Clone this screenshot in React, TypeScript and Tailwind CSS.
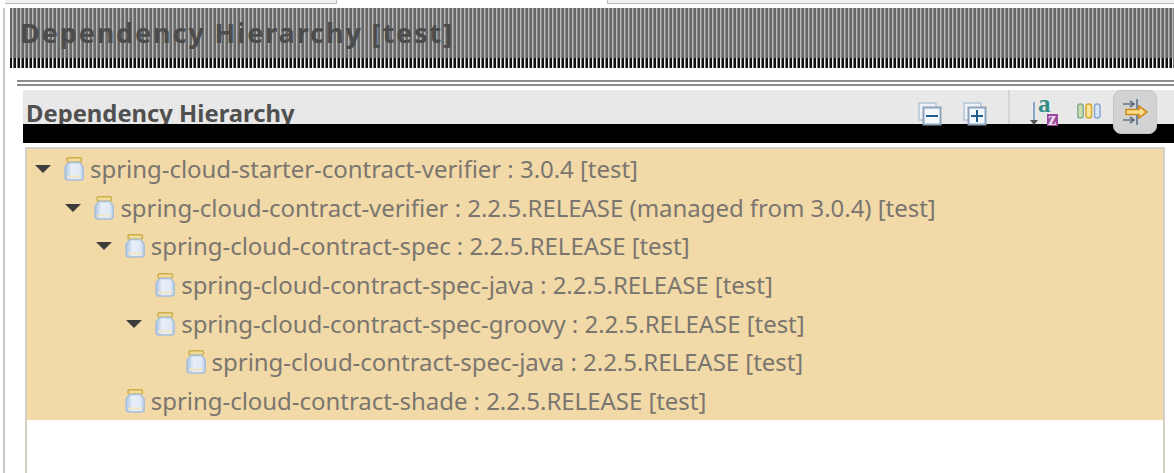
import React from "react";

const rows = [
  { depth: 0, open: true, text: "spring-cloud-starter-contract-verifier : 3.0.4 [test]" },
  { depth: 1, open: true, text: "spring-cloud-contract-verifier : 2.2.5.RELEASE (managed from 3.0.4) [test]" },
  { depth: 2, open: true, text: "spring-cloud-contract-spec : 2.2.5.RELEASE [test]" },
  { depth: 3, open: false, text: "spring-cloud-contract-spec-java : 2.2.5.RELEASE [test]" },
  { depth: 3, open: true, text: "spring-cloud-contract-spec-groovy : 2.2.5.RELEASE [test]" },
  { depth: 4, open: false, text: "spring-cloud-contract-spec-java : 2.2.5.RELEASE [test]" },
  { depth: 2, open: false, text: "spring-cloud-contract-shade : 2.2.5.RELEASE [test]" },
];

function Jar() {
  return (
    <svg width="20" height="24" viewBox="0 0 20 24" className="shrink-0">
      <defs>
        <linearGradient id="glass" x1="0" y1="0" x2="1" y2="0">
          <stop offset="0" stopColor="#a9c2e0" />
          <stop offset="0.35" stopColor="#e8eff9" />
          <stop offset="0.8" stopColor="#dfe8f5" />
          <stop offset="1" stopColor="#b0c6e2" />
        </linearGradient>
      </defs>
      <rect x="3" y="0.8" width="14.5" height="4.4" rx="1.6" fill="#f0dc9a" stroke="#cdae48" strokeWidth="1.5" />
      <path
        d="M5 5.5h10.5l3 3.5c.6.7.9 1.4.9 2.3V20a3 3 0 0 1-3 3H4a3 3 0 0 1-3-3v-8.7c0-.9.3-1.6.9-2.3z"
        fill="url(#glass)"
        stroke="#a9bfda"
        strokeWidth="1.4"
      />
      <path d="M3 19.5h14" stroke="#f1e6c4" strokeWidth="2" />
    </svg>
  );
}

function Row({ depth, open, text }: { depth: number; open: boolean; text: string }) {
  return (
    <div className="flex h-[38.72px] items-center pt-[1px]" style={{ paddingLeft: 9 + depth * 30.4 }}>
      <div className="-ml-[1px] flex w-[29px] shrink-0 items-center">
        {open && <div className="h-0 w-0 border-x-[8px] border-t-[8px] border-x-transparent border-t-[#3c3c3c]" />}
      </div>
      <Jar />
      <span className="ml-[6px] text-[24px] tracking-[-0.04px] whitespace-nowrap text-[#7a766f]">{text}</span>
    </div>
  );
}

function ToolbarIcons() {
  return (
    <div className="flex items-start">
      <svg width="24" height="24" viewBox="0 0 24 24" className="mt-[12px] mr-[21px]">
        <rect x="1" y="1" width="17" height="17" fill="#eef2f7" stroke="#b3c3d6" strokeWidth="1.5" />
        <rect x="5.5" y="5.5" width="17" height="17" fill="#f4f9fd" stroke="#8ea4bd" strokeWidth="2" />
        <path d="M8 14h12" stroke="#1f5b8c" strokeWidth="2" />
      </svg>
      <svg width="24" height="24" viewBox="0 0 24 24" className="mt-[12px] mr-[21px]">
        <rect x="1" y="1" width="17" height="17" fill="#eef2f7" stroke="#b3c3d6" strokeWidth="1.5" />
        <rect x="5.5" y="5.5" width="17" height="17" fill="#f4f9fd" stroke="#8ea4bd" strokeWidth="2" />
        <path d="M8 14h12M14 8v12" stroke="#1f5b8c" strokeWidth="2" />
      </svg>
      <div className="mr-[20px] h-[34px] w-[2px] bg-[#d4d4d4]" />
      <svg width="30" height="28" viewBox="0 0 30 28" className="mt-[10px] mr-[17px] overflow-visible">
        <path d="M4 2v21" stroke="#6f93bb" strokeWidth="1.5" />
        <path d="M0 20h8l-4 5z" fill="#555" />
        <text x="8" y="12" fontFamily="'Liberation Serif', serif" fontWeight="700" fontSize="25" fill="#2f8d83">
          a
        </text>
        <rect x="17" y="14" width="11" height="12" fill="#97489c" />
        <text x="18" y="25" fontFamily="'Liberation Serif', serif" fontWeight="700" fontSize="19" fill="#e9d6ea">
          z
        </text>
      </svg>
      <svg width="24" height="16" viewBox="0 0 24 16" className="mt-[13px] mr-[12px]">
        <rect x="0.75" y="1" width="5.5" height="14" rx="2.5" fill="#c9dcae" stroke="#86ad93" strokeWidth="1.5" />
        <rect x="9" y="1" width="5.5" height="14" rx="2.5" fill="#fbe6a0" stroke="#d7a928" strokeWidth="1.5" />
        <rect x="17.5" y="1" width="5.5" height="14" rx="2.5" fill="#d9e5f5" stroke="#8aa8d4" strokeWidth="1.5" />
      </svg>
      <div className="flex h-[44px] w-[44px] items-center justify-center rounded-[8px] border border-[#c6c6c6] bg-[#d2d2d2]">
        <svg width="28" height="28" viewBox="0 0 28 28">
          <path d="M2 6h10M9 3l4 3-4 3M16 1v10M2 22h10M9 19l4 3-4 3M16 17v10" fill="none" stroke="#5f7487" strokeWidth="1.6" />
          <path d="M5 11.5h13V8l8 6-8 6v-3.5H5z" fill="#fbdc88" stroke="#c98a1c" strokeWidth="1.6" />
        </svg>
      </div>
    </div>
  );
}

export default function App() {
  return (
    <div className="flex h-[473px] w-[1174px] flex-col overflow-hidden bg-white font-['Noto_Sans','Open_Sans',sans-serif]">
      {/* tab strip */}
      <div className="ml-[5px] flex h-[8px] shrink-0 items-start">
        <div className="h-[4px] w-[332px] border-r border-b border-[#b8b8b8] bg-[#f2f2f2]" />
        <div className="w-[270px]" />
        <div className="h-[4px] flex-1 border-b border-l border-[#b8b8b8] bg-[#f2f2f2]" />
      </div>

      <div className="ml-[3px] flex min-h-0 flex-1 border-l-[2px] border-[#c8c8c8]">
        <div className="min-w-0 flex-1">
          {/* striped editor title */}
          <div className="ml-[5px] h-[60px] bg-[repeating-linear-gradient(90deg,#111111_0px,#111111_2px,#f4f4f4_2px,#f4f4f4_3px,#777777_3px,#777777_4px)]">
            <div className="flex h-[50px] items-center bg-[#969696]/65 pl-[10px]">
              <span className="text-[27px] font-bold tracking-[1.9px] whitespace-nowrap text-[#4c4c4c]">
                Dependency Hierarchy [test]
              </span>
            </div>
          </div>

          <div className="mt-[12px] ml-[12px] h-[6px] border-y-[2px] border-[#8c8c8c]" />

          <div className="mt-[4px] ml-[18px]">
            {/* section header */}
            <div className="flex h-[34px] justify-between bg-[#e8e8e8] pr-[17px]">
              <span className="mt-[7px] pl-[3px] text-[23.8px] leading-[32px] font-bold whitespace-nowrap text-[#505050]">
                Dependency Hierarchy
              </span>
              <div className="relative z-10 -ml-[2px]">
                <ToolbarIcons />
              </div>
            </div>
            <div className="relative h-[19px] bg-black" />

            <div className="mt-[4px] mr-[9px] ml-[2px] h-[330px] border-x-[2px] border-t-[2px] border-[#d4d0c8]">
              <div className="bg-[#f2d9a8]">
                {rows.map((r, i) => (
                  <Row key={i} {...r} />
                ))}
              </div>
            </div>
          </div>
        </div>
      </div>
    </div>
  );
}
